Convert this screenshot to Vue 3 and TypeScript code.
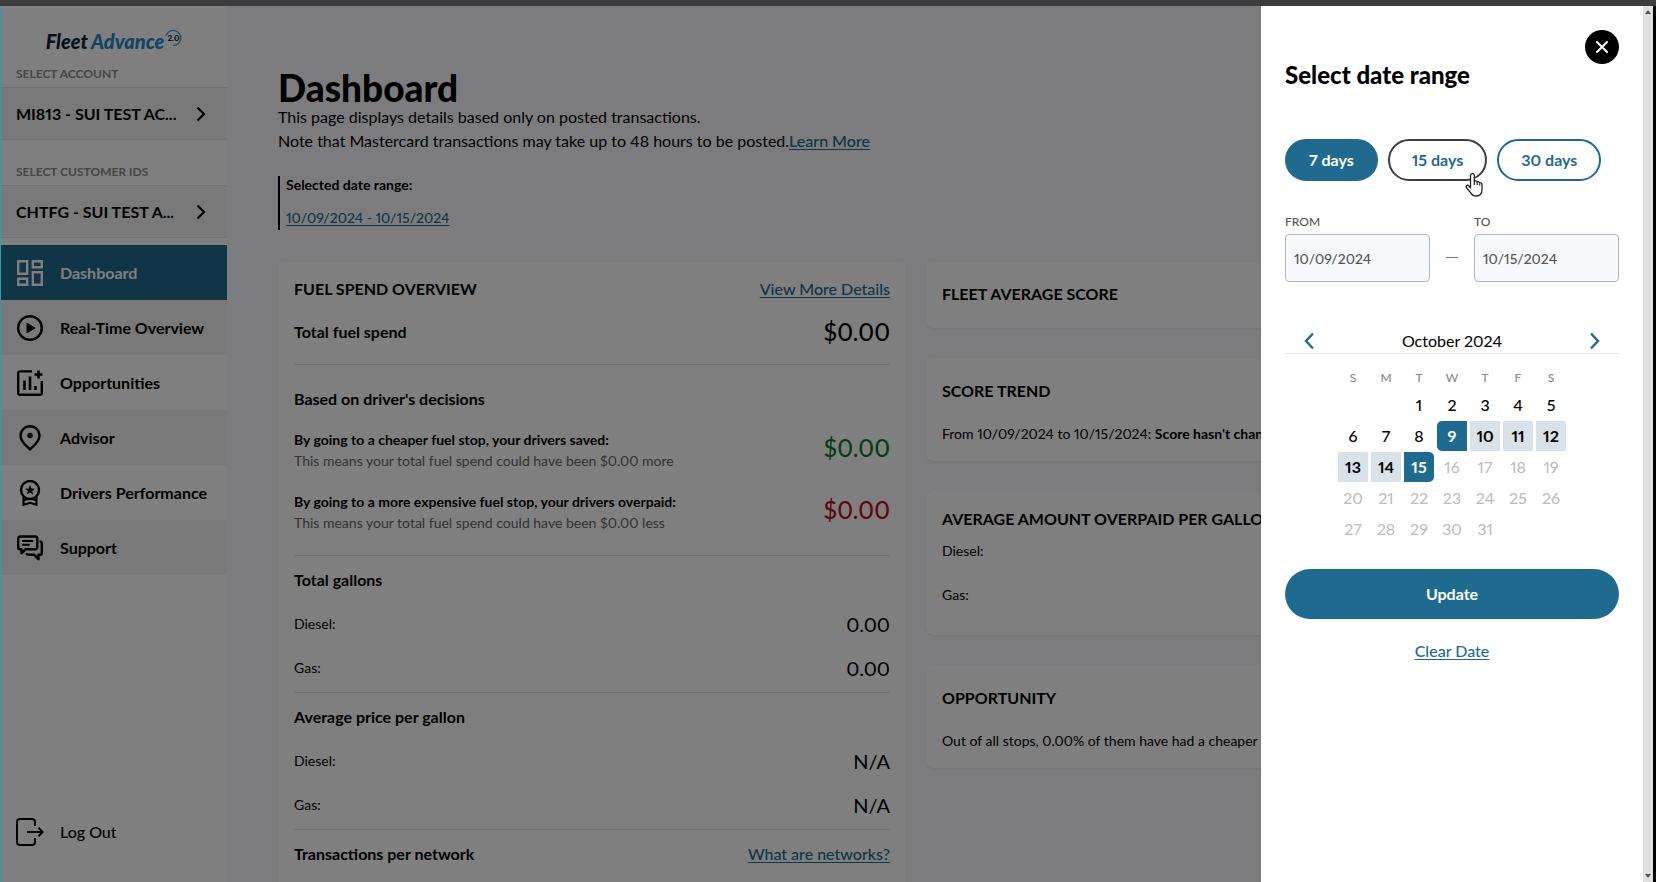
<script setup lang="ts">
import { computed, ref } from 'vue'

interface NavItem {
  label: string
  icon: 'dashboard' | 'play' | 'chart' | 'pin' | 'medal' | 'chat'
}

const navItems: NavItem[] = [
  { label: 'Dashboard', icon: 'dashboard' },
  { label: 'Real-Time Overview', icon: 'play' },
  { label: 'Opportunities', icon: 'chart' },
  { label: 'Advisor', icon: 'pin' },
  { label: 'Drivers Performance', icon: 'medal' },
  { label: 'Support', icon: 'chat' },
]

const selectors = [
  { title: 'SELECT ACCOUNT', value: 'MI813 - SUI TEST AC...' },
  { title: 'SELECT CUSTOMER IDS', value: 'CHTFG - SUI TEST A...' },
]

const metrics = [
  { title: 'Total gallons', diesel: '0.00', gas: '0.00' },
  { title: 'Average price per gallon', diesel: 'N/A', gas: 'N/A' },
]

const presets = [7, 15, 30]
const preset = ref(7)
const from = ref('10/09/2024')
const to = ref('10/15/2024')

const weekdays = ['S', 'M', 'T', 'W', 'T', 'F', 'S']
const rangeStart = 9
const rangeEnd = 15

const weeks = computed<(number | null)[][]>(() => {
  const firstWeekday = 2
  const cells: (number | null)[] = Array.from({ length: 35 }, (_, i) => {
    const day = i - firstWeekday + 1
    return day >= 1 && day <= 31 ? day : null
  })
  return Array.from({ length: 5 }, (_, w) => cells.slice(w * 7, w * 7 + 7))
})

function dayClass(day: number) {
  return {
    start: day === rangeStart,
    end: day === rangeEnd,
    between: day > rangeStart && day < rangeEnd,
  }
}
</script>

<template>
  <div class="window">
    <div class="titlebar"></div>
    <div class="frame">
      <div class="viewport">
        <div class="page">
          <aside class="sidebar">
            <div class="logo">
              <span class="logo-fleet">Fleet</span><span class="logo-advance">Advance</span>
              <span class="logo-badge">
                <svg viewBox="0 0 18 18" width="18" height="18" fill="none" stroke="#3a9bdc" stroke-width="1.3">
                  <path d="M2 6.5A7.6 7.6 0 1 1 9 16.6" />
                </svg>
                <span>2.0</span>
              </span>
            </div>
            <div v-for="s in selectors" :key="s.title" class="selector">
              <h2>{{ s.title }}</h2>
              <button type="button">
                <span>{{ s.value }}</span>
                <svg viewBox="0 0 10 16" width="10" height="16" fill="none" stroke="#000" stroke-width="2.2">
                  <path d="M1.5 1.5 8 8l-6.500 6.500" />
                </svg>
              </button>
            </div>
            <nav>
              <a v-for="(item, i) in navItems" :key="item.label" href="#" :class="{ active: i === 0 }">
                <svg viewBox="0 0 26 26" width="26" height="26" fill="none" stroke="currentColor" stroke-width="2.4">
                  <template v-if="item.icon === 'dashboard'">
                    <path d="M1.200 1.200h9v12.500h-9zM15.800 1.200h9v6h-9zM1.200 18.800h9v6h-9zM15.800 12.300h9v12.500h-9z" />
                  </template>
                  <template v-else-if="item.icon === 'play'">
                    <circle cx="13" cy="13" r="11.800" />
                    <path d="M10 8.200v9.600l8-4.800z" fill="currentColor" stroke-width="1" stroke-linejoin="round" />
                  </template>
                  <template v-else-if="item.icon === 'chart'">
                    <path d="M15 1.400H3a1.800 1.800 0 0 0-1.800 1.800v19.800a1.800 1.800 0 0 0 1.800 1.800h20a1.800 1.800 0 0 0 1.800-1.800V11" />
                    <path d="M7.500 10.500v9.500M13 6.500V20M18.500 16v4M21.500.5v8M17.500 4.500h8" stroke-width="2.600" />
                  </template>
                  <template v-else-if="item.icon === 'pin'">
                    <path d="M13 24.500C9.500 21 3.500 16.500 3.500 10.700a9.500 9.500 0 0 1 19 0C22.500 16.500 16.500 21 13 24.500z" />
                    <circle cx="13" cy="10.500" r="2.700" fill="currentColor" stroke="none" />
                  </template>
                  <template v-else-if="item.icon === 'medal'">
                    <circle cx="13" cy="10" r="9" />
                    <path d="M6.500 17v7.800l6.500-2 6.500 2V17M7 20.500c3-2 9-2 12 0" stroke-width="2" />
                    <path d="m13 5 1.400 3.400 3.600.3-2.800 2.300.9 3.500-3.100-1.900-3.100 1.900.9-3.500L8 8.700l3.600-.3z" fill="currentColor" stroke="none" />
                  </template>
                  <template v-else>
                    <path d="M3 1.500h15.500a1.800 1.800 0 0 1 1.800 1.800v9.200a1.800 1.800 0 0 1-1.800 1.800H8.500l-4 4v-4H3a1.800 1.800 0 0 1-1.800-1.800V3.300A1.800 1.800 0 0 1 3 1.500z" stroke-linejoin="round" />
                    <path d="M5.200 6h11M5.200 9.700h7.500" stroke-width="2" />
                    <path d="M22.500 6.500c1.500 0 2.300.8 2.300 2v9.500c0 1-.6 1.700-1.800 1.700h-1.500v4.500l-4.500-4.500h-5.500c-1 0-1.700-.5-1.700-1.700" stroke-linejoin="round" />
                  </template>
                </svg>
                <span>{{ item.label }}</span>
              </a>
            </nav>
            <button type="button" class="logout">
              <svg viewBox="0 0 28 28" width="28" height="28" fill="none" stroke="#000" stroke-width="2">
                <path d="M19 8V4a3 3 0 0 0-3-3H4a3 3 0 0 0-3 3v20a3 3 0 0 0 3 3h12a3 3 0 0 0 3-3v-4" />
                <path d="M11 14h15.500M22.500 9.800l4.200 4.200-4.200 4.200" />
              </svg>
              <span>Log Out</span>
            </button>
          </aside>

          <main>
            <h1>Dashboard</h1>
            <p class="intro">This page displays details based only on posted transactions.</p>
            <p class="intro">Note that Mastercard transactions may take up to 48 hours to be posted.<a href="#">Learn More</a></p>
            <div class="range">
              <span>Selected date range:</span>
              <a href="#">10/09/2024 - 10/15/2024</a>
            </div>

            <div class="cards">
              <section class="card spend">
                <header>
                  <h2>FUEL SPEND OVERVIEW</h2>
                  <a href="#">View More Details</a>
                </header>
                <div class="row total">
                  <h3>Total fuel spend</h3>
                  <span class="amount">$0.00</span>
                </div>
                <div class="decisions">
                  <h3>Based on driver's decisions</h3>
                  <div class="row">
                    <p><strong>By going to a cheaper fuel stop, your drivers saved:</strong><small>This means your total fuel spend could have been $0.00 more</small></p>
                    <span class="amount saved">$0.00</span>
                  </div>
                  <div class="row">
                    <p><strong>By going to a more expensive fuel stop, your drivers overpaid:</strong><small>This means your total fuel spend could have been $0.00 less</small></p>
                    <span class="amount overpaid">$0.00</span>
                  </div>
                </div>
                <div v-for="m in metrics" :key="m.title" class="metric">
                  <h3>{{ m.title }}</h3>
                  <div class="row"><span>Diesel:</span><span class="value">{{ m.diesel }}</span></div>
                  <div class="row"><span>Gas:</span><span class="value">{{ m.gas }}</span></div>
                </div>
                <div class="metric">
                  <div class="row">
                    <h3>Transactions per network</h3>
                    <a href="#">What are networks?</a>
                  </div>
                </div>
              </section>

              <div class="side">
                <section class="card score"><h2>FLEET AVERAGE SCORE</h2></section>
                <section class="card tall">
                  <h2>SCORE TREND</h2>
                  <p>From 10/09/2024 to 10/15/2024: <strong>Score hasn't changed</strong></p>
                </section>
                <section class="card overpay">
                  <h2>AVERAGE AMOUNT OVERPAID PER GALLON</h2>
                  <p>Diesel:</p>
                  <p>Gas:</p>
                </section>
                <section class="card tall">
                  <h2>OPPORTUNITY</h2>
                  <p>Out of all stops, 0.00% of them have had a cheaper option</p>
                </section>
              </div>
            </div>
          </main>
        </div>

        <div class="overlay"></div>

        <div class="drawer" role="dialog" aria-labelledby="drawer-title">
          <button type="button" class="close" aria-label="Close">
            <svg viewBox="0 0 12 12" width="12" height="12" stroke="#fff" stroke-width="2" stroke-linecap="round">
              <path d="M1 1l10 10M11 1 1 11" />
            </svg>
          </button>
          <h2 id="drawer-title">Select date range</h2>

          <div class="presets">
            <button
              v-for="p in presets"
              :key="p"
              type="button"
              :class="{ selected: p === preset, hovered: p === 15 }"
              @click="preset = p"
            >{{ p }} days<svg v-if="p === 15" class="pointer" viewBox="0 0 18 24" width="18" height="24">
              <path
                d="M5.500 15V2.600a1.900 1.900 0 0 1 3.800 0V8.500c.6-1 2.700-.8 2.900.6.800-.8 2.300-.4 2.500.9 1-.5 2.300.1 2.300 1.500v5c0 4-2.200 6.500-5.800 6.500-3 0-4.400-1.200-5.700-3.400L1.300 14.500c-.8-1.700 1.200-3 2.500-1.600z"
                fill="#fff" stroke="#222" stroke-width="1.300" stroke-linejoin="round"
              />
              <path d="M9.300 8.500V12M12.200 9.500V12M14.700 10.500V12.500" stroke="#222" stroke-width="1.200" fill="none" />
            </svg></button>
          </div>

          <div class="fields">
            <div class="field">
              <label for="from">FROM</label>
              <input id="from" v-model="from" type="text" />
            </div>
            <span class="dash"></span>
            <div class="field">
              <label for="to">TO</label>
              <input id="to" v-model="to" type="text" />
            </div>
          </div>

          <div class="month">
            <button type="button" aria-label="Previous month">
              <svg viewBox="0 0 10 18" width="10" height="18" fill="none" stroke="#1f6a8f" stroke-width="2.400"><path d="M9 1.500 2 9l7 7.500" /></svg>
            </button>
            <span>October 2024</span>
            <button type="button" aria-label="Next month">
              <svg viewBox="0 0 10 18" width="10" height="18" fill="none" stroke="#1f6a8f" stroke-width="2.400"><path d="M1 1.500 8 9l-7 7.500" /></svg>
            </button>
          </div>

          <table>
            <thead>
              <tr><th v-for="(d, i) in weekdays" :key="i" scope="col">{{ d }}</th></tr>
            </thead>
            <tbody>
              <tr v-for="(week, w) in weeks" :key="w">
                <td v-for="(day, i) in week" :key="i">
                  <button v-if="day" type="button" :disabled="day > rangeEnd" :class="dayClass(day)">{{ day }}</button>
                </td>
              </tr>
            </tbody>
          </table>

          <button type="button" class="update">Update</button>
          <a href="#" class="clear">Clear Date</a>
        </div>
      </div>

      <div class="scrollbar">
        <svg viewBox="0 0 6 4" width="6" height="4"><path d="M0 4 3 0l3 4z" fill="#555" /></svg>
        <svg viewBox="0 0 6 4" width="6" height="4"><path d="M0 0l3 4 3-4z" fill="#555" /></svg>
      </div>
    </div>
  </div>
</template>

<style>
body {
  margin: 0;
  overflow: hidden;
}
</style>

<style scoped>
* {
  box-sizing: border-box;
}

.window {
  height: 100vh;
  display: flex;
  flex-direction: column;
  background: #000;
  color: #000;
  font-family: Lato, "Open Sans", sans-serif;
  font-size: 16px;
  line-height: 24px;
  font-variant-numeric: proportional-nums;
}

h1,
h2,
h3,
p {
  margin: 0;
}

h2,
h3 {
  font-size: 16px;
  line-height: 24px;
  font-weight: 700;
}

button,
input {
  font: inherit;
  font-variant-numeric: proportional-nums;
  color: inherit;
  margin: 0;
}

button {
  padding: 0;
  border: 0;
  background: none;
}

a {
  color: #1f6a8f;
  text-decoration: underline;
  text-underline-offset: 2px;
}

.titlebar {
  flex: none;
  height: 6px;
  background: #3c3c3c;
}

.frame {
  flex: 1;
  min-height: 0;
  display: flex;
  border-left: 1px solid #2b9db0;
  padding-right: 3px;
}

.viewport {
  position: relative;
  flex: 1;
  min-width: 0;
  overflow: hidden;
}

.page {
  display: flex;
  height: 100%;
  background: #f8f9fc;
}

.overlay {
  position: absolute;
  inset: 0;
  background: rgba(0, 0, 0, 0.5);
}

/* Sidebar */
.sidebar {
  flex: none;
  width: 226px;
  height: 100%;
  display: flex;
  flex-direction: column;
  background: #fff;
}

.logo {
  display: flex;
  align-items: center;
  justify-content: center;
  height: 56px;
  padding-top: 14px;
  font-size: 20px;
  font-weight: 900;
  font-style: italic;
}

.logo-fleet {
  color: #04263f;
}

.logo-advance {
  margin-left: 3px;
  color: #2486c8;
}

.logo-badge {
  display: grid;
  place-items: center;
  width: 18px;
  height: 18px;
  margin-bottom: 6px;
  color: #04263f;
  font-size: 8px;
  line-height: 18px;
  font-style: normal;
}

.logo-badge > * {
  grid-area: 1 / 1;
}

.selector h2 {
  padding: 0 15px 1px;
  color: #8c8c8c;
  font-size: 12px;
}

.selector + .selector h2 {
  padding-top: 20px;
}

.selector button {
  display: flex;
  align-items: center;
  justify-content: space-between;
  width: 100%;
  height: 53px;
  padding: 0 21px 0 15px;
  border: 1px solid #e2e2e2;
  border-width: 1px 0;
  background: #f3f3f3;
  font-weight: 700;
  text-align: left;
  white-space: nowrap;
}

nav {
  margin-top: 7px;
}

nav a,
.logout {
  display: flex;
  align-items: center;
  gap: 17px;
  width: 100%;
  height: 55px;
  padding-left: 16px;
  color: #000;
  font-weight: 700;
  text-decoration: none;
}

nav a:nth-child(even) {
  background: #f3f3f3;
}

nav a.active {
  background: #1f6a8f;
  color: #fff;
}

.logout {
  gap: 16px;
  margin: auto 0 23px;
  padding-left: 15px;
  font-weight: 500;
}

/* Main */
main {
  flex: 1;
  min-width: 0;
  padding: 65px 89px 0 51px;
}

h1 {
  font-size: 37px;
  line-height: 34px;
  font-weight: 900;
}

.range {
  display: flex;
  flex-direction: column;
  align-items: flex-start;
  gap: 15px;
  margin: 23px 0 32px;
  padding: 0 0 3px 6px;
  border-left: 2px solid #000;
  font-size: 14px;
  line-height: 18px;
  font-weight: 700;
}

.range a {
  font-weight: 500;
}

.intro a {
  font-weight: 500;
}

.cards {
  display: grid;
  grid-template-columns: minmax(0, 1fr) minmax(0, 1fr);
  gap: 20px;
}

.card {
  padding: 16px;
  border-radius: 8px;
  background: #fff;
  box-shadow: 0 1px 3px rgba(20, 40, 70, 0.08);
}

.spend {
  padding-top: 15px;
}

.spend header,
.row {
  display: flex;
  align-items: center;
  justify-content: space-between;
}

.spend a {
  font-weight: 500;
}

.row.total {
  margin-top: 19px;
  padding-bottom: 20px;
}

.amount {
  font-size: 24px;
  font-weight: 500;
}

.saved {
  color: #0f7a34;
}

.overpaid {
  color: #c00d22;
}

.decisions,
.metric {
  display: flex;
  flex-direction: column;
  gap: 20px;
  border-top: 1px solid #dfe3e8;
}

.decisions {
  padding: 22px 0;
}

.decisions h3 {
  margin-bottom: -2px;
}

.decisions .row {
  align-items: flex-start;
}

.decisions .amount {
  line-height: 37px;
}

.decisions p {
  line-height: 21px;
}

.decisions strong,
.decisions small {
  display: block;
  font-size: 14px;
}

.decisions small {
  color: #666;
}

.metric {
  padding: 12px 0;
}

.metric .row > span:first-child {
  font-size: 14px;
}

.metric .value {
  font-size: 20px;
}

.side {
  display: flex;
  flex-direction: column;
  gap: 30px;
  font-size: 14px;
  white-space: nowrap;
}

.side .card {
  overflow: hidden;
}

.score {
  padding: 20px 16px 22px;
}

.tall {
  padding: 21px 16px 15px;
}

.tall p {
  margin-top: 19px;
}

.overpay {
  padding-bottom: 28px;
}

.overpay p {
  margin-top: 8px;
}

.overpay p + p {
  margin-top: 20px;
}

/* Drawer */
.drawer {
  position: absolute;
  top: 0;
  right: 0;
  bottom: 0;
  display: flex;
  flex-direction: column;
  width: 382px;
  padding: 24px;
  background: #fff;
}

.close {
  display: grid;
  place-items: center;
  align-self: flex-end;
  width: 34px;
  height: 34px;
  border-radius: 50%;
  background: #000;
}

.drawer h2 {
  font-size: 24px;
  line-height: 22px;
  font-weight: 900;
}

.presets {
  display: flex;
  gap: 10px;
  margin-top: 53px;
}

.presets button {
  position: relative;
  height: 42px;
  padding: 0 22px;
  border: 2px solid #1f6a8f;
  border-radius: 21px;
  color: #1f6a8f;
  font-weight: 700;
}

.presets .selected {
  background: #1f6a8f;
  color: #fff;
}

.presets .hovered {
  border-color: #3c3f45;
}

.pointer {
  position: absolute;
  right: 2px;
  bottom: -18px;
}

.fields {
  display: flex;
  align-items: flex-end;
  gap: 16px;
  margin-top: 29px;
}

.field {
  flex: 1;
  min-width: 0;
}

.field label {
  display: block;
  color: #555;
  font-size: 12px;
  font-weight: 500;
}

.field input {
  width: 100%;
  height: 48px;
  padding: 0 8px;
  border: 1px solid #b4b8bd;
  border-radius: 4px;
  background: #f8f9fd;
  color: #555;
  font-size: 14px;
  font-weight: 500;
}

.dash {
  width: 12px;
  height: 1px;
  margin-bottom: 24px;
  background: #777;
}

.month {
  display: flex;
  align-items: center;
  justify-content: space-between;
  margin-top: 47px;
  padding: 0 19px;
  border-bottom: 1px solid #e6e6e6;
}

.month button {
  display: grid;
}

table {
  align-self: center;
  margin-top: 12px;
  border-spacing: 3px 1px;
}

th {
  width: 30px;
  padding: 0;
  color: #888;
  font-size: 12px;
  line-height: 22px;
  font-weight: 500;
}

td {
  padding: 0;
}

td button {
  display: block;
  width: 30px;
  height: 30px;
  color: #000;
  font-weight: 500;
}

td button:disabled {
  color: #bbb;
  font-weight: 400;
}

.between {
  background: #d9e2e8;
  font-weight: 700;
}

.start,
.end {
  background: #1f6a8f;
  color: #fff;
  font-weight: 700;
}

.start {
  border-radius: 5px 0 0 5px;
}

.end {
  border-radius: 0 5px 5px 0;
}

.update {
  height: 50px;
  margin-top: 24px;
  border-radius: 25px;
  background: #1f6a8f;
  color: #fff;
  font-weight: 700;
}

.clear {
  align-self: center;
  margin-top: 20px;
  font-weight: 500;
}

.scrollbar {
  flex: none;
  display: flex;
  flex-direction: column;
  align-items: center;
  justify-content: space-between;
  width: 10px;
  padding: 4px 0;
  background: #e0e0e0;
}
</style>
